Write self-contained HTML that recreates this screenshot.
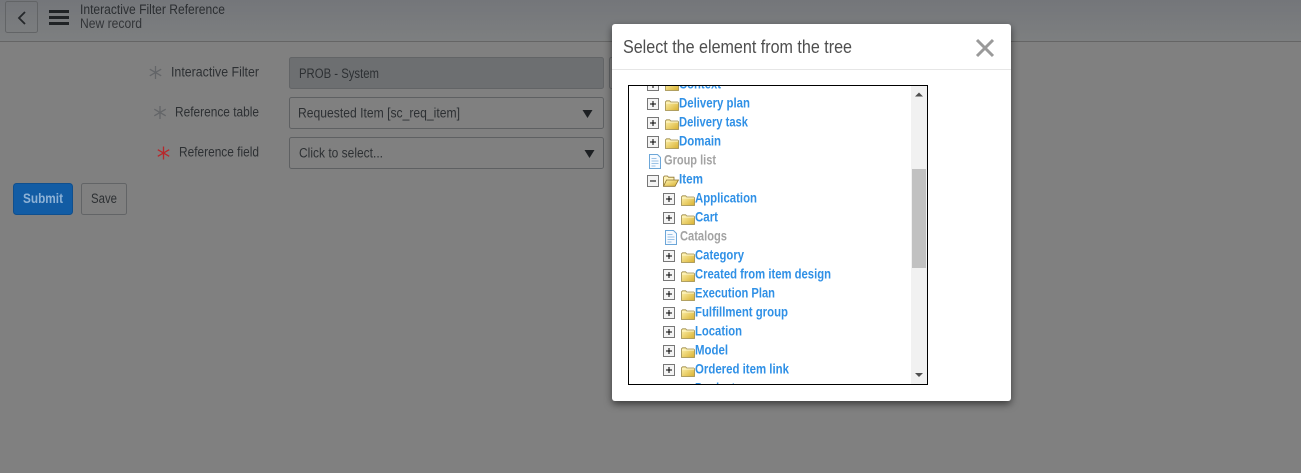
<!DOCTYPE html>
<html>
<head>
<meta charset="utf-8">
<style>
html,body{margin:0;padding:0;width:1301px;height:473px;overflow:hidden;background:#808080}
svg{display:block}
text{font-family:"Liberation Sans",sans-serif}
.n{font-size:13.5px;fill:#2b2e31}
.v{font-size:13.5px;fill:#2d3033}
.l{font-size:13.5px;font-weight:bold;fill:#2f90e6}
.g{font-size:13.5px;font-weight:bold;fill:#a3a3a3}
</style>
</head>
<body>
<svg width="1301" height="473" viewBox="0 0 1301 473" xmlns="http://www.w3.org/2000/svg">
<defs>
<linearGradient id="hd" x1="0" y1="0" x2="0" y2="1"><stop offset="0" stop-color="#74767a"/><stop offset="1" stop-color="#7d7f80"/></linearGradient>
<linearGradient id="fd" x1="0" y1="0" x2="1" y2="1"><stop offset="0" stop-color="#fff4b0"/><stop offset="1" stop-color="#d8b030"/></linearGradient>
<filter id="sh" x="-10%" y="-10%" width="120%" height="120%"><feDropShadow dx="0" dy="3" stdDeviation="4" flood-color="#000" flood-opacity=".55"/></filter>
<clipPath id="tc"><rect x="629" y="86" width="298" height="298"/></clipPath>
<symbol id="plus" width="12" height="12" viewBox="0 0 12 12"><rect x=".5" y=".5" width="11" height="11" fill="#f4f4f4" stroke="#777"/><path d="M3 6h6M6 3v6" stroke="#000" stroke-width="1"/></symbol>
<symbol id="minus" width="12" height="12" viewBox="0 0 12 12"><rect x=".5" y=".5" width="11" height="11" fill="#f4f4f4" stroke="#777"/><path d="M3 6h6" stroke="#000" stroke-width="1"/></symbol>
<symbol id="folder" width="14" height="12" viewBox="0 0 14 12"><path d="M.5 4V2.800L1.500 1.800h3.200l1 1.200h7l.8.8v7.700H.5z" fill="url(#fd)" stroke="#9c8a4a" stroke-width=".8"/><path d="M1 4h12" stroke="#fff8d0" stroke-width="1"/></symbol>
<symbol id="open" width="16" height="12" viewBox="0 0 16 12"><path d="M.5 11V2L1.500 1h3l1 1.200h5.500V5" fill="#fff3b8" stroke="#8d7430" stroke-width=".8"/><path d="M.5 11.300L3.500 5h12l-3.500 6.300z" fill="url(#fd)" stroke="#8d7430" stroke-width=".8"/></symbol>
<symbol id="doc" width="12" height="15" viewBox="0 0 12 15"><path d="M.5.5h8l3 3v11H.5z" fill="#f6faff" stroke="#6ca6d8"/><path d="M2.500 4.500h5M2.500 7h7M2.500 9.500h7M2.500 12h4" stroke="#9cc3e6" stroke-width="1"/></symbol>
</defs>

<!-- page -->
<rect width="1301" height="473" fill="#808080"/>
<rect width="1301" height="41" fill="url(#hd)"/>
<rect y="41" width="1301" height="1" fill="#656565"/>
<rect x="5.500" y="1.500" width="32" height="31" rx="2" fill="none" stroke="#626466"/>
<path d="M25 12l-6 6 6 6" fill="none" stroke="#24272a" stroke-width="1.800"/>
<path d="M49 11.500h20M49 17.500h20M49 23.500h20" stroke="#1f2225" stroke-width="3"/>
<text x="80" y="14" class="n" textLength="145" lengthAdjust="spacingAndGlyphs">Interactive Filter Reference</text>
<text x="80" y="28" class="n" fill-opacity=".9" textLength="62" lengthAdjust="spacingAndGlyphs">New record</text>

<!-- labels -->
<g stroke="#636568" stroke-width="1.300"><path d="M155.500 66v13M149.800 69.200l11.400 6.600M161.200 69.200l-11.400 6.600"/><path d="M160 106v13M154.300 109.200l11.400 6.600M165.700 109.200l-11.400 6.600"/></g>
<path d="M163.500 146.500v13M157.800 149.700l11.400 6.600M169.200 149.700l-11.400 6.600" stroke="#b8272b" stroke-width="1.300"/>
<text x="171" y="76.500" class="v" textLength="88" lengthAdjust="spacingAndGlyphs">Interactive Filter</text>
<text x="175" y="116.500" class="v" textLength="84" lengthAdjust="spacingAndGlyphs">Reference table</text>
<text x="179" y="156.500" class="v" textLength="80" lengthAdjust="spacingAndGlyphs">Reference field</text>

<!-- fields -->
<rect x="289.500" y="57.500" width="314" height="31" rx="2" fill="#6d6f71" stroke="#626466"/>
<rect x="289.500" y="97.500" width="314" height="31" rx="2" fill="#808080" stroke="#5e6062"/>
<rect x="289.500" y="137.500" width="314" height="31" rx="2" fill="#808080" stroke="#5e6062"/>
<rect x="609.500" y="57.500" width="10" height="31" rx="2" fill="#808080" stroke="#626466"/>
<text x="299" y="78" class="v" textLength="80" lengthAdjust="spacingAndGlyphs">PROB - System</text>
<text x="298" y="117.500" class="v" textLength="162" lengthAdjust="spacingAndGlyphs">Requested Item [sc_req_item]</text>
<text x="299" y="157.500" class="v" textLength="84" lengthAdjust="spacingAndGlyphs">Click to select...</text>
<path d="M582.500 110h10l-5 8z" fill="#1d2023"/>
<path d="M584.500 150h10l-5 8z" fill="#1d2023"/>

<!-- buttons -->
<rect x="13.500" y="183.500" width="59" height="31" rx="3" fill="#125ca4" stroke="#0f4f8e"/>
<text x="23" y="203" font-size="13.500" font-weight="bold" fill="#8eb2d6" textLength="40" lengthAdjust="spacingAndGlyphs">Submit</text>
<rect x="81.500" y="183.500" width="45" height="31" rx="2" fill="#808080" stroke="#626466"/>
<text x="91" y="203" class="v" textLength="26" lengthAdjust="spacingAndGlyphs">Save</text>

<!-- modal -->
<rect x="612" y="24" width="399" height="377" rx="3" fill="#fff" filter="url(#sh)"/>
<rect x="612" y="69" width="399" height="1" fill="#e6e6e6"/>
<text x="623" y="53" font-size="18.500" fill="#4e4e4e" textLength="229" lengthAdjust="spacingAndGlyphs">Select the element from the tree</text>
<path d="M977 40l16 16M993 40l-16 16" stroke="#9a9a9a" stroke-width="3"/>

<!-- tree -->
<g clip-path="url(#tc)">
<rect x="911" y="86" width="16" height="298" fill="#f1f1f1"/>
<rect x="912" y="169" width="14" height="99" fill="#c1c1c1"/>
<path d="M915 96.500h8l-4-4z" fill="#505050"/>
<path d="M915 373h8l-4 4z" fill="#505050"/>

<use href="#plus" x="647" y="79"/><use href="#folder" x="665" y="79"/>
<text x="679" y="88.500" class="l" textLength="42" lengthAdjust="spacingAndGlyphs">Context</text>

<use href="#plus" x="647" y="98"/><use href="#folder" x="665" y="99"/>
<text x="679" y="107.500" class="l" textLength="71" lengthAdjust="spacingAndGlyphs">Delivery plan</text>
<use href="#plus" x="647" y="117"/><use href="#folder" x="665" y="118"/>
<text x="679" y="126.500" class="l" textLength="69" lengthAdjust="spacingAndGlyphs">Delivery task</text>
<use href="#plus" x="647" y="136"/><use href="#folder" x="665" y="137"/>
<text x="679" y="145.500" class="l" textLength="42" lengthAdjust="spacingAndGlyphs">Domain</text>
<use href="#doc" x="649" y="154"/>
<text x="664" y="164.500" class="g" textLength="52" lengthAdjust="spacingAndGlyphs">Group list</text>
<use href="#minus" x="647" y="175"/><use href="#open" x="663" y="175"/>
<text x="679" y="183.500" class="l" textLength="24" lengthAdjust="spacingAndGlyphs">Item</text>
<use href="#plus" x="663" y="193"/><use href="#folder" x="681" y="194"/>
<text x="695" y="202.500" class="l" textLength="62" lengthAdjust="spacingAndGlyphs">Application</text>
<use href="#plus" x="663" y="212"/><use href="#folder" x="681" y="213"/>
<text x="695" y="221.500" class="l" textLength="23" lengthAdjust="spacingAndGlyphs">Cart</text>
<use href="#doc" x="665" y="230"/>
<text x="680" y="240.500" class="g" textLength="47" lengthAdjust="spacingAndGlyphs">Catalogs</text>
<use href="#plus" x="663" y="250"/><use href="#folder" x="681" y="251"/>
<text x="695" y="259.500" class="l" textLength="49" lengthAdjust="spacingAndGlyphs">Category</text>
<use href="#plus" x="663" y="269"/><use href="#folder" x="681" y="270"/>
<text x="695" y="278.500" class="l" textLength="136" lengthAdjust="spacingAndGlyphs">Created from item design</text>
<use href="#plus" x="663" y="288"/><use href="#folder" x="681" y="289"/>
<text x="695" y="297.500" class="l" textLength="80" lengthAdjust="spacingAndGlyphs">Execution Plan</text>
<use href="#plus" x="663" y="307"/><use href="#folder" x="681" y="308"/>
<text x="695" y="316.500" class="l" textLength="93" lengthAdjust="spacingAndGlyphs">Fulfillment group</text>
<use href="#plus" x="663" y="326"/><use href="#folder" x="681" y="327"/>
<text x="695" y="335.500" class="l" textLength="47" lengthAdjust="spacingAndGlyphs">Location</text>
<use href="#plus" x="663" y="345"/><use href="#folder" x="681" y="346"/>
<text x="695" y="354.500" class="l" textLength="33" lengthAdjust="spacingAndGlyphs">Model</text>
<use href="#plus" x="663" y="364"/><use href="#folder" x="681" y="365"/>
<text x="695" y="373.500" class="l" textLength="94" lengthAdjust="spacingAndGlyphs">Ordered item link</text>
<text x="695" y="392.500" class="l" textLength="40" lengthAdjust="spacingAndGlyphs">Product</text>
</g>
<rect x="628.500" y="85.500" width="299" height="299" fill="none" stroke="#000"/>
</svg>
</body>
</html>
